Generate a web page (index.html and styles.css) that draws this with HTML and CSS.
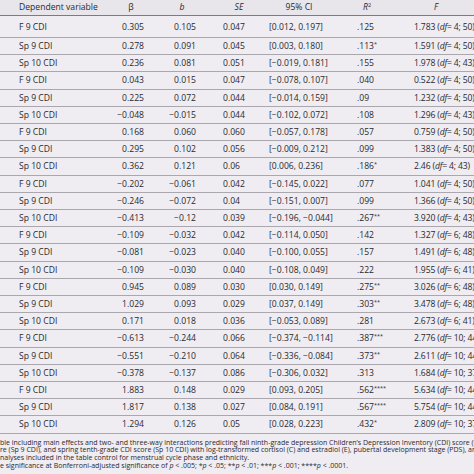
FILE: index.html
```html
<!DOCTYPE html>
<html>
<head>
<meta charset="utf-8">
<link rel="stylesheet" href="styles.css">
</head>
<body>
<div class="page">
<table class="tbl">
<colgroup>
<col class="c1"><col class="c2"><col class="c3"><col class="c4"><col class="c5"><col class="c6"><col class="c7">
</colgroup>
<thead>
<tr>
<th class="h1">Dependent variable</th>
<th class="h2">β</th>
<th class="h3"><i>b</i></th>
<th class="h4"><i>SE</i></th>
<th class="h5">95% CI</th>
<th class="h6"><i>R</i><sup>2</sup></th>
<th class="h7"><i>F</i></th>
</tr>
</thead>
<tbody>
<tr class="first"><td>F 9 CDI</td><td>0.305</td><td>0.105</td><td>0.047</td><td>[0.012, 0.197]</td><td>.125</td><td>1.783 (<i>df</i>= 4; 50)</td></tr>
<tr><td>Sp 9 CDI</td><td>0.278</td><td>0.091</td><td>0.045</td><td>[0.003, 0.180]</td><td>.113<sup>*</sup></td><td>1.591 (<i>df</i>= 4; 50)</td></tr>
<tr><td>Sp 10 CDI</td><td>0.236</td><td>0.081</td><td>0.051</td><td>[−0.019, 0.181]</td><td>.155</td><td>1.978 (<i>df</i>= 4; 43)</td></tr>
<tr><td>F 9 CDI</td><td>0.043</td><td>0.015</td><td>0.047</td><td>[−0.078, 0.107]</td><td>.040</td><td>0.522 (<i>df</i>= 4; 50)</td></tr>
<tr><td>Sp 9 CDI</td><td>0.225</td><td>0.072</td><td>0.044</td><td>[−0.014, 0.159]</td><td>.09</td><td>1.232 (<i>df</i>= 4; 50)</td></tr>
<tr><td>Sp 10 CDI</td><td>−0.048</td><td>−0.015</td><td>0.044</td><td>[−0.102, 0.072]</td><td>.108</td><td>1.296 (<i>df</i>= 4; 43)</td></tr>
<tr><td>F 9 CDI</td><td>0.168</td><td>0.060</td><td>0.060</td><td>[−0.057, 0.178]</td><td>.057</td><td>0.759 (<i>df</i>= 4; 50)</td></tr>
<tr><td>Sp 9 CDI</td><td>0.295</td><td>0.102</td><td>0.056</td><td>[−0.009, 0.212]</td><td>.099</td><td>1.383 (<i>df</i>= 4; 50)</td></tr>
<tr><td>Sp 10 CDI</td><td>0.362</td><td>0.121</td><td>0.06</td><td>[0.006, 0.236]</td><td>.186<sup>*</sup></td><td>2.46 (<i>df</i>= 4; 43)</td></tr>
<tr><td>F 9 CDI</td><td>−0.202</td><td>−0.061</td><td>0.042</td><td>[−0.145, 0.022]</td><td>.077</td><td>1.041 (<i>df</i>= 4; 50)</td></tr>
<tr><td>Sp 9 CDI</td><td>−0.246</td><td>−0.072</td><td>0.04</td><td>[−0.151, 0.007]</td><td>.099</td><td>1.366 (<i>df</i>= 4; 50)</td></tr>
<tr><td>Sp 10 CDI</td><td>−0.413</td><td>−0.12</td><td>0.039</td><td>[−0.196, −0.044]</td><td>.267<sup>**</sup></td><td>3.920 (<i>df</i>= 4; 43)</td></tr>
<tr><td>F 9 CDI</td><td>−0.109</td><td>−0.032</td><td>0.042</td><td>[−0.114, 0.050]</td><td>.142</td><td>1.327 (<i>df</i>= 6; 48)</td></tr>
<tr><td>Sp 9 CDI</td><td>−0.081</td><td>−0.023</td><td>0.040</td><td>[−0.100, 0.055]</td><td>.157</td><td>1.491 (<i>df</i>= 6; 48)</td></tr>
<tr><td>Sp 10 CDI</td><td>−0.109</td><td>−0.030</td><td>0.040</td><td>[−0.108, 0.049]</td><td>.222</td><td>1.955 (<i>df</i>= 6; 41)</td></tr>
<tr><td>F 9 CDI</td><td>0.945</td><td>0.089</td><td>0.030</td><td>[0.030, 0.149]</td><td>.275<sup>**</sup></td><td>3.026 (<i>df</i>= 6; 48)</td></tr>
<tr><td>Sp 9 CDI</td><td>1.029</td><td>0.093</td><td>0.029</td><td>[0.037, 0.149]</td><td>.303<sup>**</sup></td><td>3.478 (<i>df</i>= 6; 48)</td></tr>
<tr><td>Sp 10 CDI</td><td>0.171</td><td>0.018</td><td>0.036</td><td>[−0.053, 0.089]</td><td>.281</td><td>2.673 (<i>df</i>= 6; 41)</td></tr>
<tr><td>F 9 CDI</td><td>−0.613</td><td>−0.244</td><td>0.066</td><td>[−0.374, −0.114]</td><td>.387<sup>***</sup></td><td>2.776 (<i>df</i>= 10; 44)</td></tr>
<tr><td>Sp 9 CDI</td><td>−0.551</td><td>−0.210</td><td>0.064</td><td>[−0.336, −0.084]</td><td>.373<sup>**</sup></td><td>2.611 (<i>df</i>= 10; 44)</td></tr>
<tr><td>Sp 10 CDI</td><td>−0.378</td><td>−0.137</td><td>0.086</td><td>[−0.306, 0.032]</td><td>.313</td><td>1.684 (<i>df</i>= 10; 37)</td></tr>
<tr><td>F 9 CDI</td><td>1.883</td><td>0.148</td><td>0.029</td><td>[0.093, 0.205]</td><td>.562<sup>****</sup></td><td>5.634 (<i>df</i>= 10; 44)</td></tr>
<tr><td>Sp 9 CDI</td><td>1.817</td><td>0.138</td><td>0.027</td><td>[0.084, 0.191]</td><td>.567<sup>****</sup></td><td>5.754 (<i>df</i>= 10; 44)</td></tr>
<tr><td>Sp 10 CDI</td><td>1.294</td><td>0.126</td><td>0.05</td><td>[0.028, 0.223]</td><td>.432<sup>*</sup></td><td>2.809 (<i>df</i>= 10; 37)</td></tr>
</tbody>
</table>
<div class="notes">
<p>ble including main effects and two- and three-way interactions predicting fall ninth-grade depression Children’s Depression Inventory (CDI) score (F 9 CDI), spring ninth-grade</p>
<p>re (Sp 9 CDI), and spring tenth-grade CDI score (Sp 10 CDI) with log-transformed cortisol (C) and estradiol (E), pubertal development stage (PDS), and age.</p>
<p>nalyses included in the table control for menstrual cycle phase and ethnicity.</p>
<p>e significance at Bonferroni-adjusted significance of <i>p</i> &lt; .005; *<i>p</i> &lt; .05; **<i>p</i> &lt; .01; ***<i>p</i> &lt; .001; ****<i>p</i> &lt; .0001.</p>
</div>
</div>
</body>
</html>
```

FILE: styles.css
```css
html, body {
  margin: 0;
  padding: 0;
  overflow: hidden;
  background: #efedf2;
}
.page {
  width: 474px;
  height: 474px;
  overflow: hidden;
  font-family: "Open Sans", "DejaVu Sans", sans-serif;
  color: #2a292d;
  background: #efedf2;
}
.tbl {
  border-collapse: collapse;
  table-layout: fixed;
  width: 560px;
  font-size: 8.6px;
  white-space: nowrap;
}
.c1 { width: 100px; }
.c2 { width: 50px; }
.c3 { width: 52px; }
.c4 { width: 60px; }
.c5 { width: 83px; }
.c6 { width: 55px; }
.c7 { width: 160px; }
.tbl th {
  font-weight: normal;
  height: 15px;
  padding: 0;
  line-height: 15px;
  background: #e8e5eb;
  border-bottom: 1px solid #7d7a82;
  text-align: center;
}
.tbl th.h1 { text-align: left; padding-left: 19px; }
.tbl th.h2 { padding-left: 12px; }
.tbl th.h3 { padding-left: 12px; }
.tbl th.h4 { padding-left: 14px; }
.tbl th.h5 { padding-right: 9px; }
.tbl th.h6 { padding-right: 11px; }
.tbl th.h7 { padding-right: 88px; }
.tbl td {
  padding: 0;
  height: 16.2px;
  line-height: 16.2px;
  border-bottom: 1px solid #aaa7ae;
  text-align: left;
  overflow: visible;
}
.tbl tr.first td {
  height: 19px;
  padding-top: 2px;
}
.tbl td:nth-child(1) { padding-left: 19px; }
.tbl td:nth-child(2) { text-align: right; padding-right: 6px; }
.tbl td:nth-child(3) { text-align: right; padding-right: 6px; }
.tbl td:nth-child(4) { padding-left: 21px; }
.tbl td:nth-child(5) { padding-left: 7px; }
.tbl td:nth-child(6) { padding-left: 12px; }
.tbl td:nth-child(7) { padding-left: 14px; letter-spacing: -0.15px; }
.tbl sup {
  font-size: 5.5px;
  line-height: 0;
  vertical-align: 3px;
}
.notes {
  padding-top: 5px;
  font-size: 7px;
  line-height: 7.7px;
  white-space: nowrap;
}
.notes p {
  margin: 0;
}
```
